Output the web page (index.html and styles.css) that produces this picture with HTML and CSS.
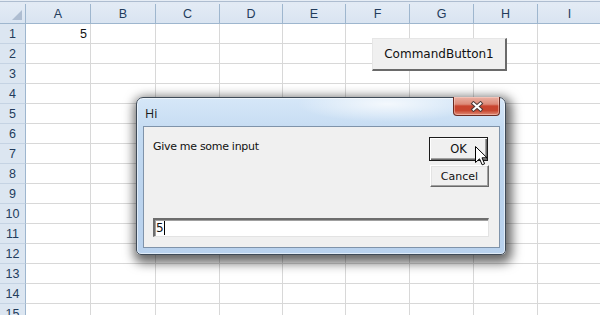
FILE: index.html
```html
<!DOCTYPE html>
<html>
<head>
<meta charset="utf-8">
<link rel="stylesheet" href="styles.css">
</head>
<body>
<div class="app">
  <div class="strip"></div>
  <div class="sheet">
    <div class="hd corner"><span class="tri"></span></div><div class="hd">A</div><div class="hd">B</div><div class="hd">C</div><div class="hd">D</div><div class="hd">E</div><div class="hd">F</div><div class="hd">G</div><div class="hd">H</div><div class="hd">I</div>
    <div class="rh">1</div><div class="c num">5</div><div class="c"></div><div class="c"></div><div class="c"></div><div class="c"></div><div class="c"></div><div class="c"></div><div class="c"></div><div class="c"></div>
    <div class="rh">2</div><div class="c"></div><div class="c"></div><div class="c"></div><div class="c"></div><div class="c"></div><div class="c"></div><div class="c"></div><div class="c"></div><div class="c"></div>
    <div class="rh">3</div><div class="c"></div><div class="c"></div><div class="c"></div><div class="c"></div><div class="c"></div><div class="c"></div><div class="c"></div><div class="c"></div><div class="c"></div>
    <div class="rh">4</div><div class="c"></div><div class="c"></div><div class="c"></div><div class="c"></div><div class="c"></div><div class="c"></div><div class="c"></div><div class="c"></div><div class="c"></div>
    <div class="rh">5</div><div class="c"></div><div class="c"></div><div class="c"></div><div class="c"></div><div class="c"></div><div class="c"></div><div class="c"></div><div class="c"></div><div class="c"></div>
    <div class="rh">6</div><div class="c"></div><div class="c"></div><div class="c"></div><div class="c"></div><div class="c"></div><div class="c"></div><div class="c"></div><div class="c"></div><div class="c"></div>
    <div class="rh">7</div><div class="c"></div><div class="c"></div><div class="c"></div><div class="c"></div><div class="c"></div><div class="c"></div><div class="c"></div><div class="c"></div><div class="c"></div>
    <div class="rh">8</div><div class="c"></div><div class="c"></div><div class="c"></div><div class="c"></div><div class="c"></div><div class="c"></div><div class="c"></div><div class="c"></div><div class="c"></div>
    <div class="rh">9</div><div class="c"></div><div class="c"></div><div class="c"></div><div class="c"></div><div class="c"></div><div class="c"></div><div class="c"></div><div class="c"></div><div class="c"></div>
    <div class="rh">10</div><div class="c"></div><div class="c"></div><div class="c"></div><div class="c"></div><div class="c"></div><div class="c"></div><div class="c"></div><div class="c"></div><div class="c"></div>
    <div class="rh">11</div><div class="c"></div><div class="c"></div><div class="c"></div><div class="c"></div><div class="c"></div><div class="c"></div><div class="c"></div><div class="c"></div><div class="c"></div>
    <div class="rh">12</div><div class="c"></div><div class="c"></div><div class="c"></div><div class="c"></div><div class="c"></div><div class="c"></div><div class="c"></div><div class="c"></div><div class="c"></div>
    <div class="rh">13</div><div class="c"></div><div class="c"></div><div class="c"></div><div class="c"></div><div class="c"></div><div class="c"></div><div class="c"></div><div class="c"></div><div class="c"></div>
    <div class="rh">14</div><div class="c"></div><div class="c"></div><div class="c"></div><div class="c"></div><div class="c"></div><div class="c"></div><div class="c"></div><div class="c"></div><div class="c"></div>
    <div class="rh">15</div><div class="c"></div><div class="c"></div><div class="c"></div><div class="c"></div><div class="c"></div><div class="c"></div><div class="c"></div><div class="c"></div><div class="c"></div>
  </div>

  <div class="cmdbtn">CommandButton1</div>

  <div class="dialog">
    <div class="titlebar">
      <span class="title">Hi</span>
      <span class="close">
        <svg width="14" height="11" viewBox="0 0 14 11">
          <path d="M3.5 2.5 L10.5 8.5 M10.5 2.5 L3.5 8.5" stroke="#4a3836" stroke-width="4" stroke-linecap="square" fill="none"/>
          <path d="M3.5 2.5 L10.5 8.5 M10.5 2.5 L3.5 8.5" stroke="#ffffff" stroke-width="2" stroke-linecap="square" fill="none"/>
        </svg>
      </span>
    </div>
    <div class="client">
      <div class="top">
        <div class="prompt">Give me some input</div>
        <div class="buttons">
          <div class="btn ok">OK</div>
          <div class="btn">Cancel</div>
        </div>
      </div>
      <div class="textbox"><span class="val">5</span><span class="caret"></span></div>
    </div>
  </div>

  <svg class="cursor" width="13" height="20" viewBox="0 0 13 20">
    <path d="M0.5 0.5 L0.5 16.5 L4.5 12.8 L7.2 18.8 L9.6 17.8 L7 11.8 L12 11.8 Z" fill="#ffffff" stroke="#000000" stroke-width="1" stroke-linejoin="miter"/>
  </svg>
</div>
</body>
</html>
```

FILE: styles.css
```css
html, body {
  margin: 0;
  padding: 0;
}
body {
  width: 600px;
  height: 315px;
  overflow: hidden;
  background: #ffffff;
}
.app {
  position: relative;
  width: 600px;
  height: 315px;
  overflow: hidden;
}
.strip {
  height: 4px;
  background: linear-gradient(#e6edf5 0 1px, #aebdd0 1px 2px, #e2eaf4 2px 4px);
}
.sheet {
  display: grid;
  grid-template-columns: 26px 65px 65px 64px 63px 63px 64px 64px 64px 64px;
  grid-auto-rows: 20px;
  font-family: "Liberation Sans", Arial, sans-serif;
  font-size: 12.5px;
}
.hd {
  box-sizing: border-box;
  background: linear-gradient(#e3ebf5, #d9e4f1);
  border-right: 1px solid #9eb6ce;
  border-bottom: 1px solid #9eb6ce;
  color: #233c5c;
  display: flex;
  align-items: center;
  justify-content: center;
  padding-top: 1px;
}
.corner {
  position: relative;
}
.tri {
  position: absolute;
  right: 3px;
  bottom: 3px;
  width: 0;
  height: 0;
  border-left: 10px solid transparent;
  border-bottom: 10px solid #aebdd1;
}
.rh {
  box-sizing: border-box;
  background: #dce6f1;
  border-right: 1px solid #9eb6ce;
  border-bottom: 1px solid #c5d3e3;
  color: #233c5c;
  display: flex;
  align-items: center;
  justify-content: center;
  padding-top: 1px;
}
.c {
  box-sizing: border-box;
  border-right: 1px solid #d8d8d8;
  border-bottom: 1px solid #d8d8d8;
  background: #ffffff;
}
.num {
  display: flex;
  align-items: center;
  justify-content: flex-end;
  padding-right: 3px;
  padding-top: 1px;
  color: #111111;
}

/* ActiveX command button on the sheet */
.cmdbtn {
  position: absolute;
  left: 372px;
  top: 38px;
  width: 135px;
  height: 33px;
  box-sizing: border-box;
  background: #f0f0f0;
  border-top: 1px solid #e6e6e6;
  border-left: 1px solid #e6e6e6;
  border-right: 2px solid #6a6a6a;
  border-bottom: 2px solid #6a6a6a;
  display: flex;
  align-items: center;
  justify-content: center;
  font-family: "DejaVu Sans", Verdana, sans-serif;
  font-size: 12px;
  color: #111111;
}

/* Input box window */
.dialog {
  position: absolute;
  left: 136px;
  top: 97px;
  width: 370px;
  height: 158px;
  box-sizing: border-box;
  border: 1px solid #3f4b58;
  border-radius: 7px 7px 5px 5px;
  background:
    radial-gradient(ellipse 90px 18px at 68% 6px, rgba(255,255,255,0.75), rgba(255,255,255,0) 100%),
    linear-gradient(180deg, #d6e7f8 0%, #c4dbf2 22%, #bcd4ee 60%, #b9d2ee 100%);
  box-shadow: 2px 4px 11px 4px rgba(0,0,0,0.6), inset 0 0 0 1px rgba(255,255,255,0.55);
  padding: 0 5px 6px 6px;
  display: flex;
  flex-direction: column;
}
.titlebar {
  height: 28px;
  display: flex;
  justify-content: space-between;
  align-items: flex-start;
}
.title {
  margin-top: 7px;
  padding-left: 2px;
  font-family: "Open Sans", "Noto Sans", sans-serif;
  font-size: 12.5px;
  color: #1a1a1a;
}
.close {
  margin-top: -1px;
  width: 47px;
  height: 19px;
  box-sizing: border-box;
  border: 1px solid #6a2b22;
  border-top: none;
  border-radius: 0 0 4px 4px;
  background: linear-gradient(180deg, #eab1a4 0%, #dd8a78 40%, #c9452f 50%, #c8462f 75%, #e08d78 100%);
  box-shadow: inset 0 0 0 1px rgba(255,220,210,0.45);
  display: flex;
  align-items: center;
  justify-content: center;
}
.client {
  flex: 1;
  border: 1px solid #7f93aa;
  background: #f0f0f0;
  padding: 10px 10px 10px 9px;
  display: flex;
  flex-direction: column;
  font-family: "DejaVu Sans", Verdana, sans-serif;
  font-size: 11px;
  color: #111111;
}
.top {
  display: flex;
  justify-content: space-between;
  align-items: flex-start;
}
.prompt {
  margin-top: 3px;
  letter-spacing: -0.3px;
}
.buttons {
  display: flex;
  flex-direction: column;
  align-items: flex-end;
  gap: 4px;
  width: 59px;
}
.btn {
  width: 59px;
  height: 22px;
  box-sizing: border-box;
  border: 1px solid;
  border-color: #ffffff #696969 #696969 #ffffff;
  box-shadow: inset -1px -1px 0 #a0a0a0, inset 1px 1px 0 #e3e3e3;
  background: #f0f0f0;
  display: flex;
  align-items: center;
  justify-content: center;
  font-size: 11px;
}
.ok {
  width: 59px;
  height: 24px;
  margin-right: 1px;
  border: 1px solid #1b1b1b;
  box-shadow: inset 1px 1px 0 #ffffff, inset -1px -1px 0 #696969, inset -2px -2px 0 #a0a0a0;
  font-size: 11.5px;
}
.textbox {
  margin-top: auto;
  height: 19px;
  box-sizing: border-box;
  background: #ffffff;
  border-top: 2px solid #6d6d6d;
  border-left: 2px solid #6d6d6d;
  border-right: 1px solid #e3e3e3;
  border-bottom: 1px solid #e3e3e3;
  box-shadow: inset 1px 1px 0 #a0a0a0;
  display: flex;
  align-items: center;
  padding-left: 1px;
  font-size: 12px;
}
.caret {
  width: 1px;
  height: 14px;
  background: #000000;
}
.cursor {
  position: absolute;
  left: 475px;
  top: 146px;
}
```
